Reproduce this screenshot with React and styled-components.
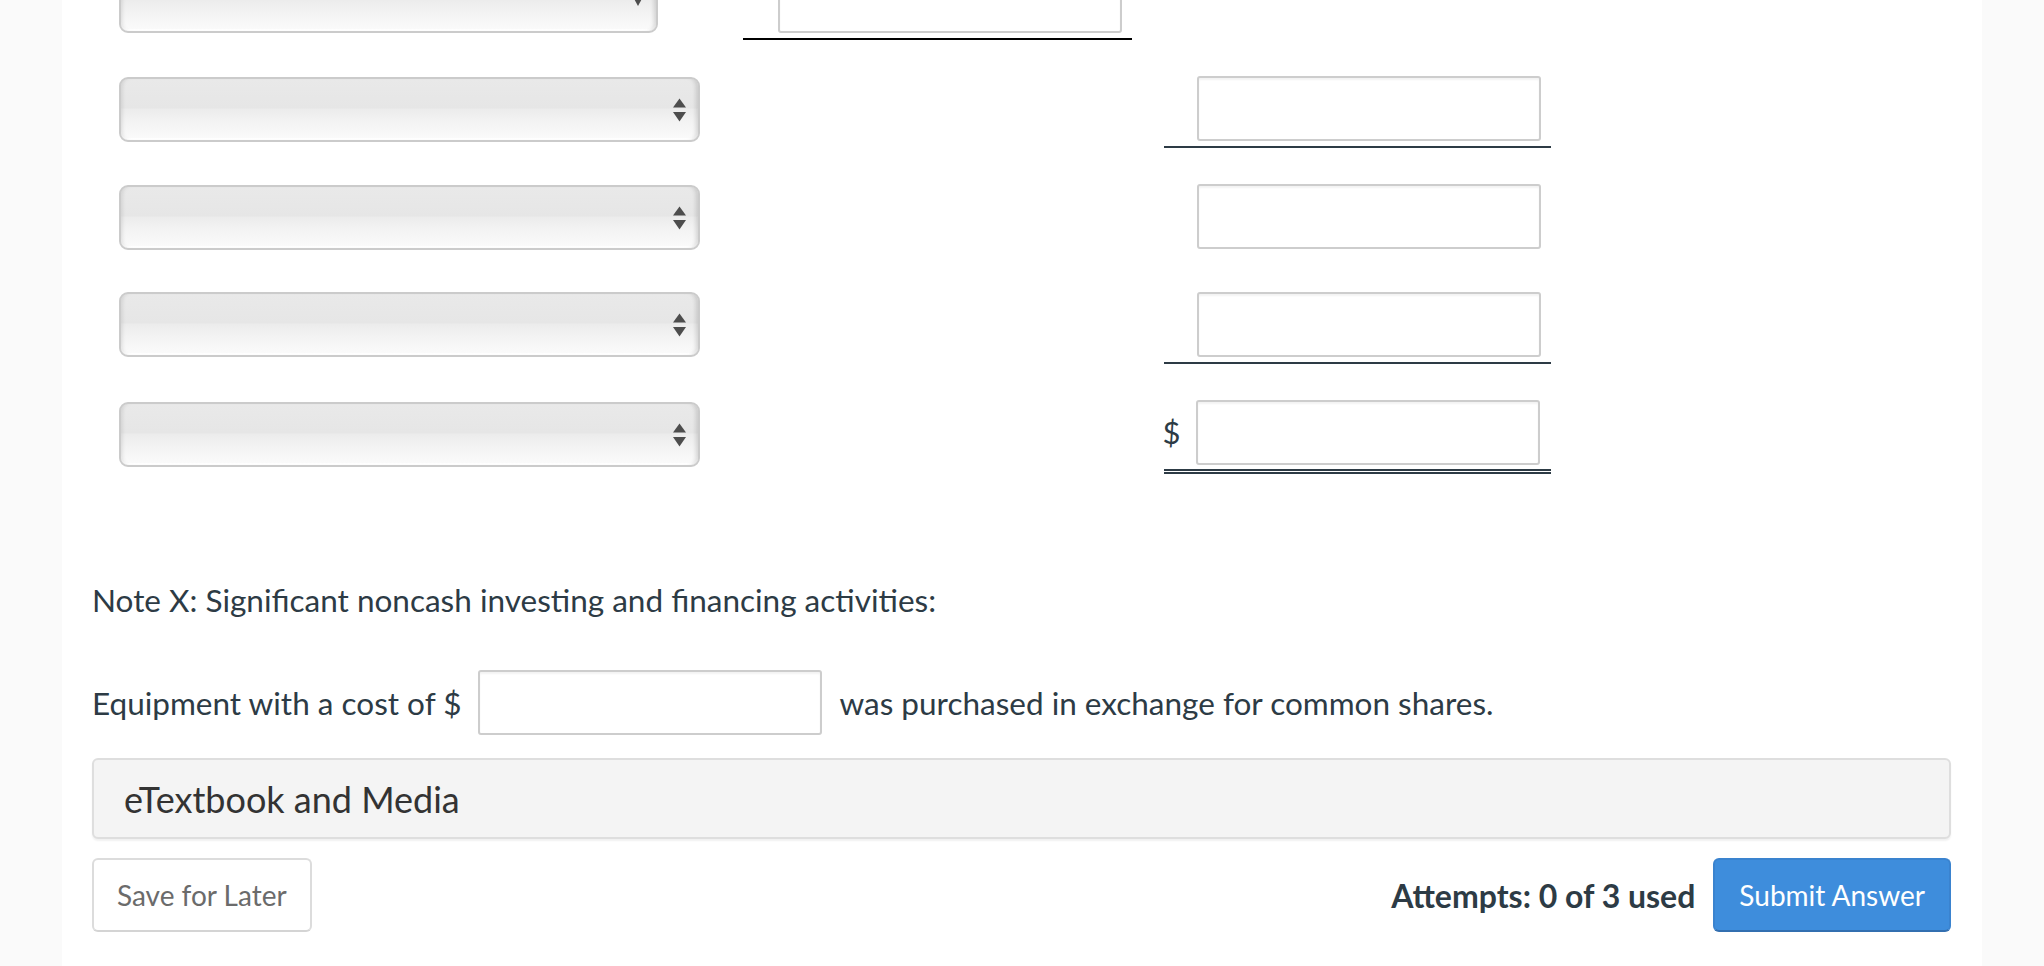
import React from 'react'
import styled, { createGlobalStyle } from 'styled-components'

const GlobalStyle = createGlobalStyle`
  html, body {
    margin: 0;
    padding: 0;
    background: #fafafa;
    overflow: hidden;
  }
  body {
    font-family: Lato, "Open Sans", sans-serif;
    color: #2d3b45;
  }
`

const Panel = styled.main`
  width: 1920px;
  min-height: 100vh;
  margin: 0 auto;
  background: #ffffff;
  box-sizing: border-box;
  padding: 0 31px 0 30px;
  display: flex;
  flex-direction: column;
`

const Table = styled.div`
  display: flex;
  flex-direction: column;
  margin-top: -68px;
  margin-left: 0.5px;
`

const Row = styled.div`
  display: flex;
`

const lines = {
  none: '2px solid transparent',
  black: '2px solid #000000',
  single: '2px solid #2d3b45',
  double: '5px double #2d3b45',
}

const Cell = styled.div`
  width: ${p => p.$w}px;
  height: ${p => (p.$line === 'double' ? 110 : 108)}px;
  box-sizing: border-box;
  padding: 36px ${p => p.$pr || 0}px 0 ${p => p.$pl || 0}px;
  border-bottom: ${p => lines[p.$line || 'none']};
  display: flex;
  align-items: flex-start;
`

const SelectBox = styled.div`
  width: ${p => p.$w}px;
  height: 65px;
  box-sizing: border-box;
  border: 2px solid #cbcbcb;
  border-radius: 9px;
  background: linear-gradient(
    to bottom,
    #e9e9e9 0%,
    #e6e6e6 47%,
    #ececec 50%,
    #f3f3f3 70%,
    #fbfbfb 100%
  );
  box-shadow: inset 4px 0 4px -3px rgba(0, 0, 0, 0.12),
    inset -5px 0 4px -3px rgba(0, 0, 0, 0.14),
    inset 0 -2px 1px rgba(255, 255, 255, 0.9);
  display: flex;
  align-items: center;
  justify-content: flex-end;
  padding-right: ${p => p.$pr}px;
  margin-top: ${p => p.$mt || 0}px;
`

const AnswerInput = styled.input`
  width: 344px;
  height: 65px;
  box-sizing: border-box;
  border: 2px solid #cdcdcd;
  border-radius: 3px;
  background: #ffffff;
  box-shadow: inset 0 2px 2px rgba(0, 0, 0, 0.05);
  font-family: Lato, sans-serif;
  font-size: 28px;
  padding: 0 12px;
  outline: none;
`

const Dollar = styled.span`
  width: 33px;
  font-size: 31px;
  line-height: 65px;
  color: #2d3b45;
  margin-left: -1px;
`

const Slot = styled.span`
  width: 33px;
`

const NoteText = styled.p`
  margin: 105px 0 0 0;
  font-size: 31.5px;
  line-height: 42px;
  color: #2d3b45;
`

const InlineRow = styled.div`
  display: flex;
  align-items: center;
  margin-top: 49px;
  font-size: 31.5px;
  line-height: 42px;
  color: #2d3b45;
  gap: 17px;
`

const MediaBar = styled.div`
  margin-top: 23px;
  height: 81px;
  box-sizing: border-box;
  background: #f4f4f4;
  border: 2px solid #dedede;
  border-radius: 6px;
  box-shadow: 0 2px 2px rgba(0, 0, 0, 0.06);
  padding: 18px 30px;
  font-size: 36px;
  line-height: 42px;
  color: #333333;
`

const Actions = styled.div`
  margin-top: 19px;
  display: flex;
  align-items: center;
`

const Attempts = styled.span`
  margin-left: auto;
  margin-right: 18px;
  font-size: 32px;
  font-weight: 700;
  color: #2d3b45;
`

const Button = styled.button`
  height: 74px;
  box-sizing: border-box;
  border-radius: 6px;
  font-family: Lato, sans-serif;
  font-size: 28px;
  padding: 0 ${p => (p.$primary ? 24 : 23)}px;
  background: ${p => (p.$primary ? '#3e8ddc' : '#ffffff')};
  color: ${p => (p.$primary ? '#ffffff' : '#6b6b6b')};
  border: 2px solid ${p => (p.$primary ? '#3a83cf' : '#dcdcdc')};
  border-bottom-color: ${p => (p.$primary ? '#336fb0' : '#d4d4d4')};
  cursor: pointer;
`

const UpDown = () => (
  <svg width="13" height="24" viewBox="0 0 13 24">
    <polygon points="6.5,0.5 13,9.5 0,9.5" fill="#4d4d4d" />
    <polygon points="0,14 13,14 6.5,23.5" fill="#4d4d4d" />
  </svg>
)

const Down = () => (
  <svg width="12" height="11" viewBox="0 0 12 11">
    <polygon points="0,0 12,0 6,11" fill="#4d4d4d" />
  </svg>
)

const rows = [
  { line: 'single', mt: 1 },
  { line: 'none', mt: 1 },
  { line: 'single', mt: 0 },
  { line: 'double', mt: 2 },
]

export default function App() {
  return (
    <>
      <GlobalStyle />
      <Panel>
        <Table>
          <Row>
            <Cell $w={650} $pl={26}>
              <SelectBox $w={539} $pr={12}>
                <Down />
              </SelectBox>
            </Cell>
            <Cell $w={389} $pl={35} $pr={10} $line="black">
              <AnswerInput />
            </Cell>
          </Row>
          {rows.map((r, i) => (
            <Row key={i}>
              <Cell $w={650} $pl={26}>
                <SelectBox $w={581} $pr={12} $mt={r.mt}>
                  <UpDown />
                </SelectBox>
              </Cell>
              <Cell $w={421} />
              <Cell $w={387} $pr={10} $line={r.line}>
                {r.line === 'double' ? <Dollar>$</Dollar> : <Slot />}
                <AnswerInput />
              </Cell>
            </Row>
          ))}
        </Table>

        <NoteText>Note X: Significant noncash investing and financing activities:</NoteText>

        <InlineRow>
          <span>Equipment with a cost of $</span>
          <AnswerInput />
          <span>was purchased in exchange for common shares.</span>
        </InlineRow>

        <MediaBar>eTextbook and Media</MediaBar>

        <Actions>
          <Button>Save for Later</Button>
          <Attempts>Attempts: 0 of 3 used</Attempts>
          <Button $primary>Submit Answer</Button>
        </Actions>
      </Panel>
    </>
  )
}
